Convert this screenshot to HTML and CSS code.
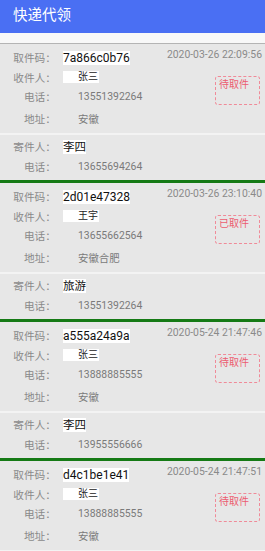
FILE: index.html
```html
<!DOCTYPE html>
<html lang="zh">
<head>
<meta charset="UTF-8">
<meta name="viewport" content="width=device-width, initial-scale=1.0">
<title>快递代领</title>
<link rel="stylesheet" href="styles.css">
</head>
<body>
<div class="toolbar">快递代领</div>
<div class="strip"></div>

<div class="list">
    <div class="item">
        <div class="top">
            <div class="fields">
                <div class="row"><span class="label">取件码：</span><span class="code">7a866c0b76</span></div>
                <div class="row"><span class="label">收件人：</span><span class="name">张三</span></div>
                <div class="row"><span class="label">电话：</span><span class="val">13551392264</span></div>
                <div class="row"><span class="label">地址：</span><span class="val">安徽</span></div>
            </div>
            <div class="aside">
                <div class="date">2020-03-26 22:09:56</div>
                <div class="status">待取件</div>
            </div>
        </div>
        <div class="bottom">
            <div class="row"><span class="label">寄件人：</span><span class="sender">李四</span></div>
            <div class="row"><span class="label">电话：</span><span class="val">13655694264</span></div>
        </div>
    </div>

    <div class="item">
        <div class="top">
            <div class="fields">
                <div class="row"><span class="label">取件码：</span><span class="code">2d01e47328</span></div>
                <div class="row"><span class="label">收件人：</span><span class="name">王宇</span></div>
                <div class="row"><span class="label">电话：</span><span class="val">13655662564</span></div>
                <div class="row"><span class="label">地址：</span><span class="val">安徽合肥</span></div>
            </div>
            <div class="aside">
                <div class="date">2020-03-26 23:10:40</div>
                <div class="status">已取件</div>
            </div>
        </div>
        <div class="bottom">
            <div class="row"><span class="label">寄件人：</span><span class="sender">旅游</span></div>
            <div class="row"><span class="label">电话：</span><span class="val">13551392264</span></div>
        </div>
    </div>

    <div class="item">
        <div class="top">
            <div class="fields">
                <div class="row"><span class="label">取件码：</span><span class="code">a555a24a9a</span></div>
                <div class="row"><span class="label">收件人：</span><span class="name">张三</span></div>
                <div class="row"><span class="label">电话：</span><span class="val">13888885555</span></div>
                <div class="row"><span class="label">地址：</span><span class="val">安徽</span></div>
            </div>
            <div class="aside">
                <div class="date">2020-05-24 21:47:46</div>
                <div class="status">待取件</div>
            </div>
        </div>
        <div class="bottom">
            <div class="row"><span class="label">寄件人：</span><span class="sender">李四</span></div>
            <div class="row"><span class="label">电话：</span><span class="val">13955556666</span></div>
        </div>
    </div>

    <div class="item">
        <div class="top">
            <div class="fields">
                <div class="row"><span class="label">取件码：</span><span class="code">d4c1be1e41</span></div>
                <div class="row"><span class="label">收件人：</span><span class="name">张三</span></div>
                <div class="row"><span class="label">电话：</span><span class="val">13888885555</span></div>
                <div class="row"><span class="label">地址：</span><span class="val">安徽</span></div>
            </div>
            <div class="aside">
                <div class="date">2020-05-24 21:47:51</div>
                <div class="status">待取件</div>
            </div>
        </div>
        <div class="bottom">
            <div class="row"><span class="label">寄件人：</span><span class="sender">李四</span></div>
            <div class="row"><span class="label">电话：</span><span class="val">13955556666</span></div>
        </div>
    </div>
</div>
</body>
</html>
```

FILE: styles.css
```css
body {
    margin: 0;
    font-family: Roboto, "Noto Sans CJK SC", sans-serif;
    background-color: #f8f8f8;
    overflow: hidden;
}
.toolbar {
    height: 33px;
    line-height: 31px;
    padding-left: 13px;
    background-color: #4a6ff3;
    color: #fff;
    font-size: 14.5px;
}
.strip {
    height: 10px;
    background-color: #f8f8f8;
    border-bottom: 1px solid #b4b4b4;
}
.item {
    border-bottom: 3px solid #157a15;
}
.top {
    display: flex;
    height: 85px;
    padding-top: 4px;
    background-color: #e7e7e7;
    border-bottom: 2px solid #f3f3f3;
}
.fields {
    flex: 1;
}
.row {
    display: flex;
    align-items: center;
    height: 19.5px;
}
.top .row:last-child {
    height: 21px;
    padding-top: 1px;
}
.label {
    width: 46px;
    padding-left: 10px;
    margin-right: 7px;
    text-align: right;
    font-size: 10.7px;
    color: #8a8a8a;
    white-space: nowrap;
}
.code {
    background-color: #fff;
    color: #111;
    font-size: 12px;
    line-height: 14px;
}
.name {
    background-color: #fff;
    color: #222;
    font-size: 10px;
    line-height: 12px;
    padding-left: 15px;
    width: 21px;
}
.sender {
    background-color: #fff;
    color: #111;
    font-size: 11.5px;
    line-height: 14px;
}
.val {
    padding-left: 15px;
    font-size: 10.4px;
    color: #7a7a7a;
}
.aside {
    width: 105px;
    padding-right: 3px;
    display: flex;
    flex-direction: column;
    align-items: flex-end;
}
.date {
    font-size: 10.4px;
    line-height: 12px;
    margin-top: 1px;
    color: #8a8a8a;
    white-space: nowrap;
}
.status {
    width: 40px;
    height: 25px;
    margin-top: 15px;
    margin-right: 2px;
    padding: 2px 0 0 3px;
    border: 1px dashed #f08a98;
    border-radius: 3px;
    font-size: 10px;
    line-height: 12px;
    color: #ec5c70;
}
.bottom {
    height: 45px;
    padding-top: 2px;
    box-sizing: border-box;
    background-color: #e7e7e7;
}
```
